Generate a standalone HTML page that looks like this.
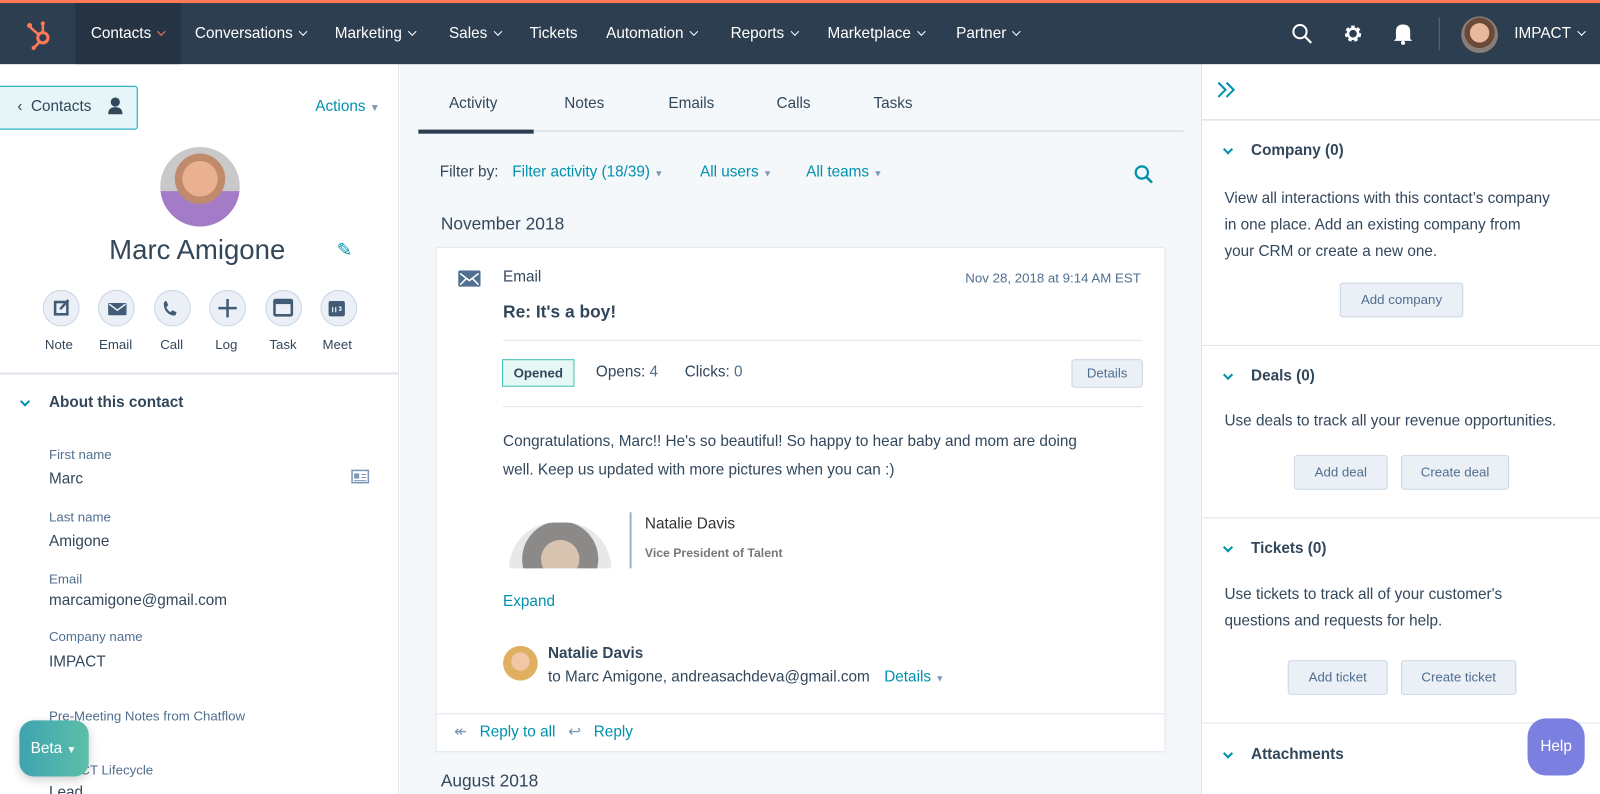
<!DOCTYPE html>
<html><head><meta charset="utf-8">
<style>
*{box-sizing:border-box;margin:0;padding:0}
html,body{width:1600px;height:794px;overflow:hidden}
body{font-family:"Liberation Sans",sans-serif;color:#33475b;background:#fff;position:relative}
#w{position:absolute;left:0;top:0;width:1568px;height:778px;transform:scale(1.0204);transform-origin:0 0}
.nav{position:absolute;left:0;top:0;width:1568px;height:63px;background:#2d3e50;border-top:3px solid #ff7a59}
.nav .it{position:absolute;top:0;height:60px;line-height:60px;color:#fff;font-size:15px}
.ch{display:inline-block;width:6px;height:6px;border-right:1.5px solid currentColor;border-bottom:1.5px solid currentColor;transform:rotate(45deg);margin-left:7px;position:relative;top:-3px}
.left{position:absolute;left:0;top:63px;width:391px;height:731px;background:#fff;border-right:1px solid #dfe3eb}
.mid{position:absolute;left:392px;top:63px;width:785px;height:731px;background:#f5f8fa}
.right{position:absolute;left:1177px;top:63px;width:423px;height:731px;background:#fff;border-left:1px solid #dfe3eb}
.a{position:absolute;white-space:nowrap}
.teal{color:#0091ae}
.lbl{font-size:13px;color:#516f90}
.val{font-size:15px;color:#33475b}
.circ{position:absolute;width:36px;height:36px;border-radius:50%;background:#eaf0f6;border:1px solid #cbd6e2}
.btn{position:absolute;background:#eaf0f6;border:1px solid #cbd6e2;border-radius:3px;font-size:13px;color:#506e91;text-align:center}
.hr{position:absolute;height:1px;background:#dfe3eb}
.sc{position:absolute;width:7px;height:7px;border-right:2px solid #0091ae;border-bottom:2px solid #0091ae;transform:rotate(45deg)}
</style></head><body><div id="w">
<div class="nav">
 <svg class="a" style="left:24px;top:14px" width="30" height="32" viewBox="0 0 30 32"><circle cx="18" cy="20" r="5" fill="none" stroke="#ff7a59" stroke-width="3"/><line x1="18" y1="15" x2="18" y2="7" stroke="#ff7a59" stroke-width="2.5"/><circle cx="18" cy="6" r="2" fill="#ff7a59"/><line x1="14" y1="17" x2="6" y2="10" stroke="#ff7a59" stroke-width="2.5"/><circle cx="5" cy="8" r="2.5" fill="#ff7a59"/><line x1="15" y1="24" x2="10" y2="29" stroke="#ff7a59" stroke-width="2.5"/><circle cx="9" cy="30" r="2" fill="#ff7a59"/></svg>
 <div class="a" style="left:74px;top:0;width:103px;height:60px;background:#253342"></div>
 <div class="it" style="left:89px">Contacts<span class="ch" style="color:#ff7a59"></span></div>
 <div class="it" style="left:191px">Conversations<span class="ch"></span></div>
 <div class="it" style="left:328px">Marketing<span class="ch"></span></div>
 <div class="it" style="left:440px">Sales<span class="ch"></span></div>
 <div class="it" style="left:519px">Tickets</div>
 <div class="it" style="left:594px">Automation<span class="ch"></span></div>
 <div class="it" style="left:716px">Reports<span class="ch"></span></div>
 <div class="it" style="left:811px">Marketplace<span class="ch"></span></div>
 <div class="it" style="left:937px">Partner<span class="ch"></span></div>
 <svg class="a" style="left:1265px;top:19px" width="22" height="22"><circle cx="9" cy="9" r="6.5" fill="none" stroke="#fff" stroke-width="2"/><line x1="14" y1="14" x2="20" y2="20" stroke="#fff" stroke-width="2.2"/></svg>
 <svg class="a" style="left:1315px;top:19px" width="22" height="22" viewBox="0 0 22 22"><circle cx="11" cy="11" r="6" fill="none" stroke="#fff" stroke-width="4" stroke-dasharray="3 2.3"/><circle cx="11" cy="11" r="5" fill="none" stroke="#fff" stroke-width="2.5"/></svg>
 <svg class="a" style="left:1365px;top:18px" width="20" height="24"><path d="M3 17 L3 10 Q3 3 10 3 Q17 3 17 10 L17 17 L19 19 L1 19 Z" fill="#fff"/><circle cx="10" cy="21" r="2" fill="#fff"/></svg>
 <div class="a" style="left:1410px;top:14px;width:1px;height:32px;background:#516f90"></div>
 <div class="a" style="left:1432px;top:13px;width:36px;height:36px;border-radius:50%;background:radial-gradient(circle at 50% 45%,#e8b99a 0 35%,#6b4a3a 36% 55%,#8a7f78 56%)"></div>
 <div class="it" style="left:1484px">IMPACT<span class="ch"></span></div>
</div>

<div class="left">
 <div class="a" style="left:-2px;top:21px;width:137px;height:43px;border:1px solid #00a4bd;border-radius:3px;background:#e5f5f8"></div>
 <div class="a" style="left:17px;top:33px;font-size:15px">‹ &nbsp;Contacts</div>
 <svg class="a" style="left:105px;top:32px" width="16" height="18"><circle cx="8" cy="5" r="4.5" fill="#33475b"/><path d="M1 17 Q1 10 8 10 Q15 10 15 17Z" fill="#33475b"/></svg>
 <div class="a teal" style="left:309px;top:33px;font-size:15px">Actions <span style="font-size:10px;color:#7c98b6">▼</span></div>
 <div class="a" style="left:157px;top:81px;width:78px;height:78px;border-radius:50%;background:radial-gradient(circle at 50% 40%,#e9b190 0 28%,#c08a6c 29% 40%,#fff0 41%),linear-gradient(#c9c9c9 0 55%,#a37bc7 56%)"></div>
 <div class="a" style="left:107px;top:167px;font-size:27px;color:#33475b">Marc Amigone</div>
 <div class="a teal" style="left:330px;top:172px;font-size:18px">✎</div>
 <div class="circ" style="left:42px;top:221px"></div><div class="circ" style="left:96px;top:221px"></div><div class="circ" style="left:151px;top:221px"></div><div class="circ" style="left:205px;top:221px"></div><div class="circ" style="left:260px;top:221px"></div><div class="circ" style="left:314px;top:221px"></div>
 <svg class="a" style="left:42px;top:221px" width="310" height="36">
  <rect x="12" y="12" width="12" height="12" fill="none" stroke="#425b76" stroke-width="2.5"/><path d="M17 19 L25 10" stroke="#425b76" stroke-width="2.5"/>
  <rect x="64" y="13" width="18" height="12" rx="1" fill="#425b76"/><path d="M65 14 L73 20 L81 14" stroke="#eaf0f6" stroke-width="1.5" fill="none"/>
  <path d="M120 11 Q117 13 120 20 Q124 26 130 25 L131 22 L127 20 L125 22 Q122 20 121 17 L123 15 L121 11Z" fill="#425b76"/>
  <path d="M181 9 V27 M172 18 H190" stroke="#425b76" stroke-width="2.5"/>
  <rect x="227" y="10" width="17" height="15" rx="1" fill="none" stroke="#425b76" stroke-width="2.5"/><rect x="227" y="10" width="17" height="4" fill="#425b76"/>
  <rect x="280" y="11" width="16" height="15" rx="2" fill="#425b76"/><path d="M284 17 v5 M287 17 v5 M290 17 h2 v3 h-2" stroke="#eaf0f6" stroke-width="1.2" fill="none"/>
 </svg>
 <div class="a" style="top:267px;left:44px;font-size:13px">Note</div>
 <div class="a" style="top:267px;left:97px;font-size:13px">Email</div>
 <div class="a" style="top:267px;left:157px;font-size:13px">Call</div>
 <div class="a" style="top:267px;left:211px;font-size:13px">Log</div>
 <div class="a" style="top:267px;left:264px;font-size:13px">Task</div>
 <div class="a" style="top:267px;left:316px;font-size:13px">Meet</div>
 <div class="hr" style="left:0;top:302px;width:391px;height:2px"></div>
 <div class="sc" style="left:21px;top:327px"></div>
 <div class="a" style="left:48px;top:323px;font-size:15px;font-weight:bold">About this contact</div>
 <div class="a lbl" style="left:48px;top:375px">First name</div><div class="a val" style="left:48px;top:398px">Marc</div>
 <svg class="a" style="left:344px;top:397px" width="18" height="14"><rect x="1" y="1" width="16" height="12" fill="none" stroke="#7c98b6" stroke-width="1.5"/><rect x="3" y="4" width="5" height="5" fill="#7c98b6"/><path d="M10 5h5M10 8h5M3 11h12" stroke="#7c98b6"/></svg>
 <div class="a lbl" style="left:48px;top:436px">Last name</div><div class="a val" style="left:48px;top:459px">Amigone</div>
 <div class="a lbl" style="left:48px;top:497px">Email</div><div class="a val" style="left:48px;top:517px">marcamigone@gmail.com</div>
 <div class="a lbl" style="left:48px;top:553px">Company name</div><div class="a val" style="left:48px;top:577px">IMPACT</div>
 <div class="a lbl" style="left:48px;top:631px">Pre-Meeting Notes from Chatflow</div>
 <div class="a lbl" style="left:48px;top:684px">IMPACT Lifecycle</div>
 <div class="a val" style="left:48px;top:705px">Lead</div>
 <div class="a" style="left:19px;top:643px;width:68px;height:55px;border-radius:14px;background:linear-gradient(90deg,#3fa3b0,#5cbfa8);box-shadow:0 3px 10px rgba(0,0,0,.2);color:#fff;font-size:15px;line-height:55px;padding-left:11px">Beta <span style="font-size:10px">▼</span></div>
</div>

<div class="mid">
 <div class="a" style="left:48px;top:30px;font-size:15px">Activity</div>
 <div class="a" style="left:161px;top:30px;font-size:15px">Notes</div>
 <div class="a" style="left:263px;top:30px;font-size:15px">Emails</div>
 <div class="a" style="left:369px;top:30px;font-size:15px">Calls</div>
 <div class="a" style="left:464px;top:30px;font-size:15px">Tasks</div>
 <div class="hr" style="left:18px;top:65px;width:750px;background:#cbd6e2"></div>
 <div class="a" style="left:18px;top:64px;width:113px;height:4px;background:#2d3e50"></div>
 <div class="a" style="left:39px;top:97px;font-size:15px">Filter by:</div>
 <div class="a teal" style="left:110px;top:97px;font-size:15px">Filter activity (18/39) <span style="font-size:9px;color:#7c98b6">▼</span></div>
 <div class="a teal" style="left:294px;top:97px;font-size:15px">All users <span style="font-size:9px;color:#7c98b6">▼</span></div>
 <div class="a teal" style="left:398px;top:97px;font-size:15px">All teams <span style="font-size:9px;color:#7c98b6">▼</span></div>
 <svg class="a" style="left:719px;top:98px" width="20" height="20"><circle cx="8" cy="8" r="6" fill="none" stroke="#0091ae" stroke-width="2.2"/><line x1="12.5" y1="12.5" x2="18" y2="18" stroke="#0091ae" stroke-width="2.5"/></svg>
 <div class="a" style="left:40px;top:147px;font-size:17px">November 2018</div>
 <div class="a" style="left:35px;top:179px;width:715px;height:495px;background:#fff;border:1px solid #e5eaf0;box-shadow:0 1px 3px rgba(0,0,0,.05)"></div>
 <svg class="a" style="left:57px;top:202px" width="22" height="16"><rect width="22" height="16" rx="2" fill="#516f90"/><path d="M2 3 L11 10 L20 3 M2 14 L8 8 M20 14 L14 8" stroke="#fff" stroke-width="1.5" fill="none"/></svg>
 <div class="a" style="left:101px;top:200px;font-size:15px">Email</div>
 <div class="a" style="left:554px;top:202px;font-size:13px;color:#516f90">Nov 28, 2018 at 9:14 AM EST</div>
 <div class="a" style="left:101px;top:233px;font-size:17px;font-weight:bold">Re: It's a boy!</div>
 <div class="hr" style="left:101px;top:270px;width:627px"></div>
 <div class="a" style="left:100px;top:289px;width:71px;height:27px;border:1px solid #45c0b0;background:#e5f8f6;font-size:13px;font-weight:bold;text-align:center;line-height:25px">Opened</div>
 <div class="a" style="left:192px;top:293px;font-size:15px">Opens: <span style="color:#516f90">4</span></div>
 <div class="a" style="left:279px;top:293px;font-size:15px">Clicks: <span style="color:#516f90">0</span></div>
 <div class="btn" style="left:658px;top:289px;width:70px;height:28px;line-height:26px">Details</div>
 <div class="hr" style="left:101px;top:335px;width:627px"></div>
 <div class="a" style="left:101px;top:356px;font-size:15px;line-height:28px;white-space:normal;width:590px">Congratulations, Marc!! He's so beautiful! So happy to hear baby and mom are doing well. Keep us updated with more pictures when you can :)</div>
 <div class="a" style="left:107px;top:449px;width:100px;height:45px;border-radius:50px 50px 0 0;background:radial-gradient(circle at 50% 80%,#d8c4b0 0 30%,#8c8a88 31% 60%,#e8e8e8 61%)"></div>
 <div class="a" style="left:225px;top:439px;width:2px;height:55px;background:#8fb8d8"></div>
 <div class="a" style="left:240px;top:442px;font-size:15px;color:#333">Natalie Davis</div>
 <div class="a" style="left:240px;top:472px;font-size:12px;color:#777;font-weight:bold">Vice President of Talent</div>
 <div class="a teal" style="left:101px;top:518px;font-size:15px">Expand</div>
 <div class="a" style="left:101px;top:570px;width:34px;height:34px;border-radius:50%;background:radial-gradient(circle at 50% 45%,#f0c8a8 0 35%,#e0b060 36%)"></div>
 <div class="a" style="left:145px;top:569px;font-size:15px;font-weight:bold">Natalie Davis</div>
 <div class="a" style="left:145px;top:592px;font-size:15px">to Marc Amigone, andreasachdeva@gmail.com <span class="teal" style="margin-left:10px">Details <span style="font-size:9px;color:#7c98b6">▼</span></span></div>
 <div class="hr" style="left:36px;top:636px;width:713px"></div>
 <div class="a teal" style="left:53px;top:645px;font-size:15px"><span style="color:#7c98b6">↞</span>&nbsp;&nbsp; Reply to all &nbsp;&nbsp;<span style="color:#7c98b6">↩</span>&nbsp;&nbsp; Reply</div>
 <div class="a" style="left:40px;top:693px;font-size:17px">August 2018</div>
</div>

<div class="right">
 <svg class="a" style="left:14px;top:16px" width="22" height="18"><path d="M2 2 L9 9 L2 16 M10 2 L17 9 L10 16" fill="none" stroke="#0091ae" stroke-width="2"/></svg>
 <div class="hr" style="left:0;top:54px;width:423px;background:#cbd6e2"></div>
 <div class="sc" style="left:22px;top:80px"></div>
 <div class="a" style="left:48px;top:76px;font-size:15px;font-weight:bold">Company (0)</div>
 <div class="a" style="left:22px;top:119px;font-size:15px;line-height:26px;white-space:normal;width:320px">View all interactions with this contact’s company in one place. Add an existing company from your CRM or create a new one.</div>
 <div class="btn" style="left:135px;top:214px;width:121px;height:34px;line-height:32px">Add company</div>
 <div class="hr" style="left:0;top:275px;width:423px"></div>
 <div class="sc" style="left:22px;top:301px"></div>
 <div class="a" style="left:48px;top:297px;font-size:15px;font-weight:bold">Deals (0)</div>
 <div class="a" style="left:22px;top:341px;font-size:15px">Use deals to track all your revenue opportunities.</div>
 <div class="btn" style="left:90px;top:383px;width:92px;height:34px;line-height:32px">Add deal</div>
 <div class="btn" style="left:195px;top:383px;width:106px;height:34px;line-height:32px">Create deal</div>
 <div class="hr" style="left:0;top:444px;width:423px"></div>
 <div class="sc" style="left:22px;top:470px"></div>
 <div class="a" style="left:48px;top:466px;font-size:15px;font-weight:bold">Tickets (0)</div>
 <div class="a" style="left:22px;top:507px;font-size:15px;line-height:26px;white-space:normal;width:320px">Use tickets to track all of your customer's questions and requests for help.</div>
 <div class="btn" style="left:84px;top:584px;width:98px;height:34px;line-height:32px">Add ticket</div>
 <div class="btn" style="left:195px;top:584px;width:113px;height:34px;line-height:32px">Create ticket</div>
 <div class="hr" style="left:0;top:645px;width:423px"></div>
 <div class="sc" style="left:22px;top:672px"></div>
 <div class="a" style="left:48px;top:668px;font-size:15px;font-weight:bold">Attachments</div>
 <div class="a" style="left:319px;top:641px;width:56px;height:56px;border-radius:18px;background:#7b7fe0;color:#fff;font-size:15px;text-align:center;line-height:56px">Help</div>
</div>
</div></body></html>
